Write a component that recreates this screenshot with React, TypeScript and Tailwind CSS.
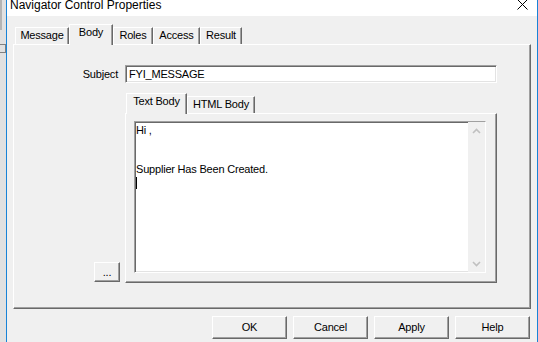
import React from "react";

const raised =
  "border border-t-white border-l-white border-r-[#696969] border-b-[#696969] shadow-[inset_-1px_-1px_0_#a0a0a0]";
const sunken =
  "border border-t-[#a0a0a0] border-l-[#a0a0a0] border-r-white border-b-white shadow-[inset_1px_1px_0_#696969,inset_-1px_-1px_0_#e3e3e3]";

function Tab({ label, w, selected }: { label: string; w: string; selected?: boolean }) {
  if (selected) {
    return (
      <div
        className={`${w} h-[21px] -mb-px relative z-10 bg-[#f0f0f0] border-t border-l border-r border-t-white border-l-white border-r-[#696969] shadow-[inset_-1px_0_0_#a0a0a0] text-center pt-[1px] leading-[13px]`}
      >
        {label}
      </div>
    );
  }
  return (
    <div
      className={`${w} h-[17px] border-t border-l border-r border-t-white border-l-white border-r-[#696969] shadow-[inset_-1px_0_0_#a0a0a0] text-center leading-[15px]`}
    >
      {label}
    </div>
  );
}

function Btn({ label }: { label: string }) {
  return (
    <div className={`w-[75px] h-[23px] ${raised} flex items-center justify-center`}>{label}</div>
  );
}

export default function App() {
  return (
    <div className="w-[538px] h-[342px] overflow-hidden flex bg-[#f0f0f0] font-['Liberation_Sans',Arial,sans-serif] text-[11px] tracking-[-0.2px] text-black">
      <div className="w-[6px] h-full bg-[#e1e1e1] flex flex-col">
        <div className="w-[2px] h-[30px] bg-[#b4b4b4]" />
        <div className="mt-[14px] w-[6px] h-[9px] border border-l-0 border-[#808080]" />
      </div>
      <div className="w-px h-full bg-[#1883d7]" />
      <div className="w-[530px] h-full flex flex-col">
        <div className="h-[16px] shrink-0 bg-white flex">
          <div className="pl-[3px] -mt-[1px] text-[12px] leading-[12px] tracking-normal">Navigator Control Properties</div>
          <svg className="ml-auto mr-[9px] -mt-[1px]" width="11" height="11" viewBox="0 0 11 11">
            <path d="M0.5 0.5 L10.5 10.5 M10.5 0.5 L0.5 10.5" stroke="#000" strokeWidth="1" />
          </svg>
        </div>
        <div className="flex-1 flex flex-col pl-[6px] pr-[6px] pt-[8px]">
          <div className="flex items-end pl-[2px] h-[20px]">
            <Tab label="Message" w="w-[54px]" />
            <Tab label="Body" w="w-[44px]" selected />
            <Tab label="Roles" w="w-[40px]" />
            <Tab label="Access" w="w-[47px]" />
            <Tab label="Result" w="w-[42px]" />
          </div>
          <div className={`h-[265px] w-[518px] ${raised} flex flex-col`}>
            <div className="flex items-center mt-[20px] h-[18px]">
              <div className="w-[104px] text-right">Subject</div>
              <div className={`ml-[7px] w-[372px] h-[18px] bg-white ${sunken} flex items-center pl-[3px]`}>
                FYI_MESSAGE
              </div>
            </div>
            <div className="flex mt-[11px]">
              <div className="w-[111px] flex items-end justify-end pr-[5px] pb-[1px]">
                <div className={`w-[26px] h-[20px] ${raised} flex items-center justify-center leading-[10px]`}>...</div>
              </div>
              <div className="w-[372px] flex flex-col">
                <div className="flex items-end pl-[1px] h-[19px]">
                  <Tab label="Text Body" w="w-[61px]" selected />
                  <Tab label="HTML Body" w="w-[68px]" />
                </div>
                <div className={`h-[170px] ${raised} pl-[8px] pt-[7px]`}>
                  <div className={`w-[352px] h-[152px] ${sunken} bg-white flex`}>
                    <div className="flex-1 pl-[1px] pt-[2px] leading-[13px]">
                      <div>Hi ,</div>
                      <div>&nbsp;</div>
                      <div>&nbsp;</div>
                      <div>Supplier Has Been Created.</div>
                      <div className="h-[13px] flex items-center">
                        <div className="w-px h-[12px] bg-black" />
                      </div>
                    </div>
                    <div className="w-[17px] h-full bg-[#f0f0f0] flex flex-col justify-between items-center pt-[6px] pb-[5px]">
                      <svg width="9" height="6" viewBox="0 0 9 6">
                        <path d="M1 5 L4.5 1.5 L8 5" fill="none" stroke="#c0c0c0" strokeWidth="1.6" />
                      </svg>
                      <svg width="9" height="6" viewBox="0 0 9 6">
                        <path d="M1 1 L4.5 4.5 L8 1" fill="none" stroke="#c0c0c0" strokeWidth="1.6" />
                      </svg>
                    </div>
                  </div>
                </div>
              </div>
            </div>
          </div>
          <div className="flex justify-end gap-[6px] mt-[7px] pr-[1px]">
            <Btn label="OK" />
            <Btn label="Cancel" />
            <Btn label="Apply" />
            <Btn label="Help" />
          </div>
        </div>
      </div>
      <div className="w-px h-full bg-[#1883d7]" />
    </div>
  );
}
